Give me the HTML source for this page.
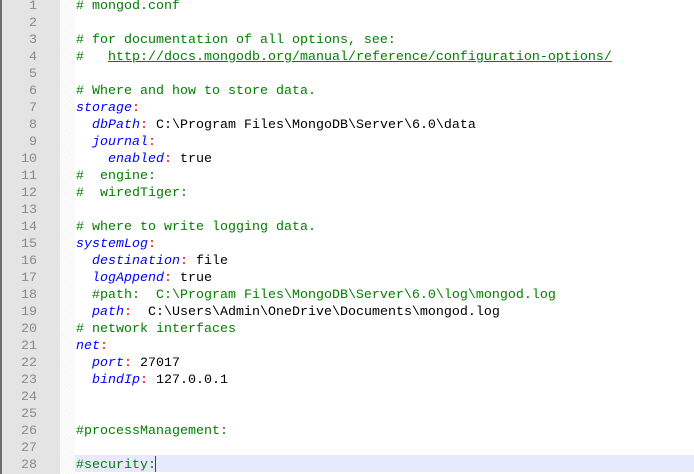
<!DOCTYPE html>
<html><head><style>
body{margin:0;width:694px;height:474px;overflow:hidden;background:#fff;font-family:"Liberation Mono",monospace;font-size:13.33px;}
#lb{position:absolute;left:0;top:0;width:2px;height:474px;background:#6d6d6d}
#g{position:absolute;left:2px;top:0;width:58px;height:474px;background:#e4e4e4}
#m{position:absolute;left:60px;top:0;width:15px;height:474px;background:repeating-linear-gradient(45deg,#f4f4f4 0 1px,#fff 1px 2px)}
#hl{position:absolute;left:75px;top:455px;width:619px;height:17px;background:#e8e8ff}
.l{position:absolute;left:0;height:17px;line-height:17px;white-space:pre}
.n{width:37px;text-align:right;color:#8a8a8a}
.t{left:76px}
.c{color:#008000}.u{text-decoration:underline}
.k{color:#0000ff;font-style:italic}.p{color:#ff0000}
#caret{position:absolute;left:155px;top:456px;width:1px;height:16px;background:#8000ff}
</style></head><body>
<div id="lb"></div><div id="g"></div><div id="m"></div><div id="hl"></div>
<div id="ln"></div><div id="tx"></div>
<div class="l n" style="top:-2px">1</div><div class="l n" style="top:15px">2</div><div class="l n" style="top:32px">3</div><div class="l n" style="top:49px">4</div><div class="l n" style="top:66px">5</div><div class="l n" style="top:83px">6</div><div class="l n" style="top:100px">7</div><div class="l n" style="top:117px">8</div><div class="l n" style="top:134px">9</div><div class="l n" style="top:151px">10</div><div class="l n" style="top:168px">11</div><div class="l n" style="top:185px">12</div><div class="l n" style="top:202px">13</div><div class="l n" style="top:219px">14</div><div class="l n" style="top:236px">15</div><div class="l n" style="top:253px">16</div><div class="l n" style="top:270px">17</div><div class="l n" style="top:287px">18</div><div class="l n" style="top:304px">19</div><div class="l n" style="top:321px">20</div><div class="l n" style="top:338px">21</div><div class="l n" style="top:355px">22</div><div class="l n" style="top:372px">23</div><div class="l n" style="top:389px">24</div><div class="l n" style="top:406px">25</div><div class="l n" style="top:423px">26</div><div class="l n" style="top:440px">27</div><div class="l n" style="top:457px">28</div>
<div class="l t c" style="top:-2px"># mongod.conf</div>
<div class="l t c" style="top:32px"># for documentation of all options, see:</div>
<div class="l t c" style="top:49px">#   <span class="u">http://docs.mongodb.org/manual/reference/configuration-options/</span></div>
<div class="l t c" style="top:83px"># Where and how to store data.</div>
<div class="l t" style="top:100px"><span class="k">storage</span><span class="p">:</span></div>
<div class="l t" style="top:117px">  <span class="k">dbPath</span><span class="p">:</span> C:\Program Files\MongoDB\Server\6.0\data</div>
<div class="l t" style="top:134px">  <span class="k">journal</span><span class="p">:</span></div>
<div class="l t" style="top:151px">    <span class="k">enabled</span><span class="p">:</span> true</div>
<div class="l t c" style="top:168px">#  engine:</div>
<div class="l t c" style="top:185px">#  wiredTiger:</div>
<div class="l t c" style="top:219px"># where to write logging data.</div>
<div class="l t" style="top:236px"><span class="k">systemLog</span><span class="p">:</span></div>
<div class="l t" style="top:253px">  <span class="k">destination</span><span class="p">:</span> file</div>
<div class="l t" style="top:270px">  <span class="k">logAppend</span><span class="p">:</span> true</div>
<div class="l t c" style="top:287px">  #path:  C:\Program Files\MongoDB\Server\6.0\log\mongod.log</div>
<div class="l t" style="top:304px">  <span class="k">path</span><span class="p">:</span>  C:\Users\Admin\OneDrive\Documents\mongod.log</div>
<div class="l t c" style="top:321px"># network interfaces</div>
<div class="l t" style="top:338px"><span class="k">net</span><span class="p">:</span></div>
<div class="l t" style="top:355px">  <span class="k">port</span><span class="p">:</span> 27017</div>
<div class="l t" style="top:372px">  <span class="k">bindIp</span><span class="p">:</span> 127.0.0.1</div>
<div class="l t c" style="top:423px">#processManagement:</div>
<div class="l t c" style="top:457px">#security:</div>
<div id="caret"></div>
</body></html>
